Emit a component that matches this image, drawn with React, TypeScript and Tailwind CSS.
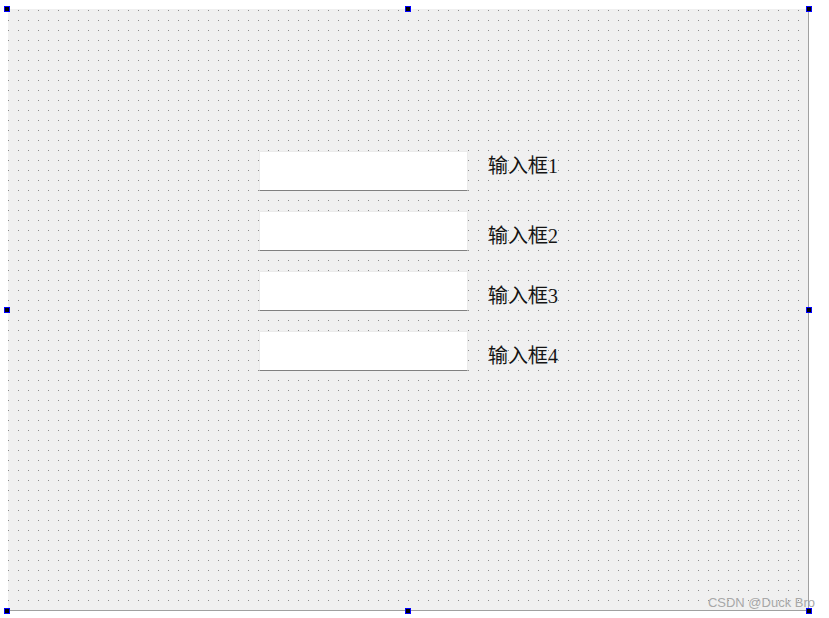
import React from 'react';

const fields = [
  { label: '输入框1', shift: '-mt-[10px]' },
  { label: '输入框2', shift: 'mt-[10px]' },
  { label: '输入框3', shift: 'mt-[10px]' },
  { label: '输入框4', shift: 'mt-[10px]' },
];

function Handle() {
  return <div className="w-[6px] h-[6px] border border-[#0000ff] bg-black" />;
}

export default function App() {
  return (
    <div className="relative w-[829px] h-[618px] bg-white pt-[9px] pl-[8px] overflow-hidden">
      {/* designer form */}
      <div className="w-[801px] h-[602px] bg-[#f0f0f0] border-r border-b border-[#a0a0a0] bg-[radial-gradient(circle_at_0.5px_0.5px,#8c8c8c_0.8px,transparent_0.8px)] bg-[length:10px_10px] bg-[position:0px_1px]">
        <div className="flex flex-col gap-[20px] pt-[142px] pl-[251px]">
          {fields.map((f) => (
            <div key={f.label} className="flex items-center h-[40px]">
              <div className="w-[209px] h-[40px] bg-white border border-[#ebebeb] border-b-[#808080]" />
              <span
                className={`ml-[20px] text-[20px] leading-none text-[#151515] ${f.shift}`}
                style={{ fontFamily: '"Liberation Serif", "Noto Sans CJK SC", serif' }}
              >
                {f.label}
              </span>
            </div>
          ))}
        </div>
      </div>

      {/* selection handles */}
      <div className="absolute left-[4px] top-[6px] w-[808px] h-[608px] flex flex-col justify-between pointer-events-none">
        <div className="flex justify-between">
          <Handle />
          <Handle />
          <Handle />
        </div>
        <div className="flex justify-between">
          <Handle />
          <Handle />
        </div>
        <div className="flex justify-between">
          <Handle />
          <Handle />
          <Handle />
        </div>
      </div>

      <div
        className="absolute right-[14px] bottom-[7px] text-[13px] leading-[16px] text-[#a8a8a8] whitespace-nowrap"
        style={{ fontFamily: '"Liberation Sans", Arial, sans-serif' }}
      >
        CSDN @Duck Bro
      </div>
    </div>
  );
}
